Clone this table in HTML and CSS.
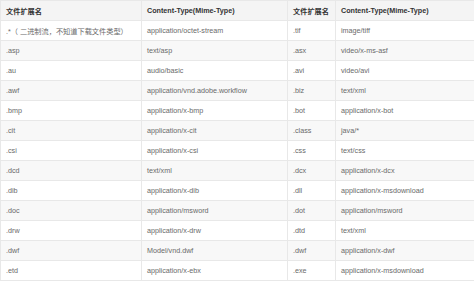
FILE: index.html
```
<!DOCTYPE html>
<html lang="zh">
<head>
  <meta charset="UTF-8">
  <title>Mime-Type</title>
  <link rel="stylesheet" href="styles.css">
</head>
<body>
  <table class="mime-table">
    <colgroup>
      <col class="c1"><col class="c2"><col class="c3"><col class="c4">
    </colgroup>
    <thead>
      <tr>
        <th>文件扩展名</th><th>Content-Type(Mime-Type)</th>
        <th>文件扩展名</th><th>Content-Type(Mime-Type)</th>
      </tr>
    </thead>
    <tbody>
      <tr><td>.*（ 二进制流，不知道下载文件类型）</td><td>application/octet-stream</td><td>.tif</td><td>image/tiff</td></tr>
      <tr><td>.asp</td><td>text/asp</td><td>.asx</td><td>video/x-ms-asf</td></tr>
      <tr><td>.au</td><td>audio/basic</td><td>.avi</td><td>video/avi</td></tr>
      <tr><td>.awf</td><td>application/vnd.adobe.workflow</td><td>.biz</td><td>text/xml</td></tr>
      <tr><td>.bmp</td><td>application/x-bmp</td><td>.bot</td><td>application/x-bot</td></tr>
      <tr><td>.cit</td><td>application/x-cit</td><td>.class</td><td>java/*</td></tr>
      <tr><td>.csi</td><td>application/x-csi</td><td>.css</td><td>text/css</td></tr>
      <tr><td>.dcd</td><td>text/xml</td><td>.dcx</td><td>application/x-dcx</td></tr>
      <tr><td>.dib</td><td>application/x-dib</td><td>.dll</td><td>application/x-msdownload</td></tr>
      <tr><td>.doc</td><td>application/msword</td><td>.dot</td><td>application/msword</td></tr>
      <tr><td>.drw</td><td>application/x-drw</td><td>.dtd</td><td>text/xml</td></tr>
      <tr><td>.dwf</td><td>Model/vnd.dwf</td><td>.dwf</td><td>application/x-dwf</td></tr>
      <tr><td>.etd</td><td>application/x-ebx</td><td>.exe</td><td>application/x-msdownload</td></tr>
    </tbody>
  </table>
</body>
</html>
```
FILE: styles.css
```
body {
  margin: 0;
  background: #fff;
  font-family: "Liberation Sans", Arial, "Noto Sans CJK SC", sans-serif;
  font-size: 7.2px;
  color: #6a6a6a;
}
.mime-table {
  width: 474px;
  border-collapse: collapse;
  table-layout: fixed;
}
.c1 { width: 141px; }
.c2 { width: 146px; }
.c3 { width: 48px; }
.c4 { width: 139px; }
.mime-table th,
.mime-table td {
  height: 20px;
  padding: 0 5px;
  text-align: left;
  border: 1px solid #e8e8e8;
  white-space: nowrap;
  overflow: hidden;
  box-sizing: border-box;
}
.mime-table th {
  background: #f4f4f4;
  color: #333;
  font-family: "Liberation Sans Narrow", "Liberation Sans", "Noto Sans CJK SC", sans-serif;
  font-weight: bold;
}
.mime-table tbody tr:nth-child(even) td {
  background: #f8f8f8;
}
```
